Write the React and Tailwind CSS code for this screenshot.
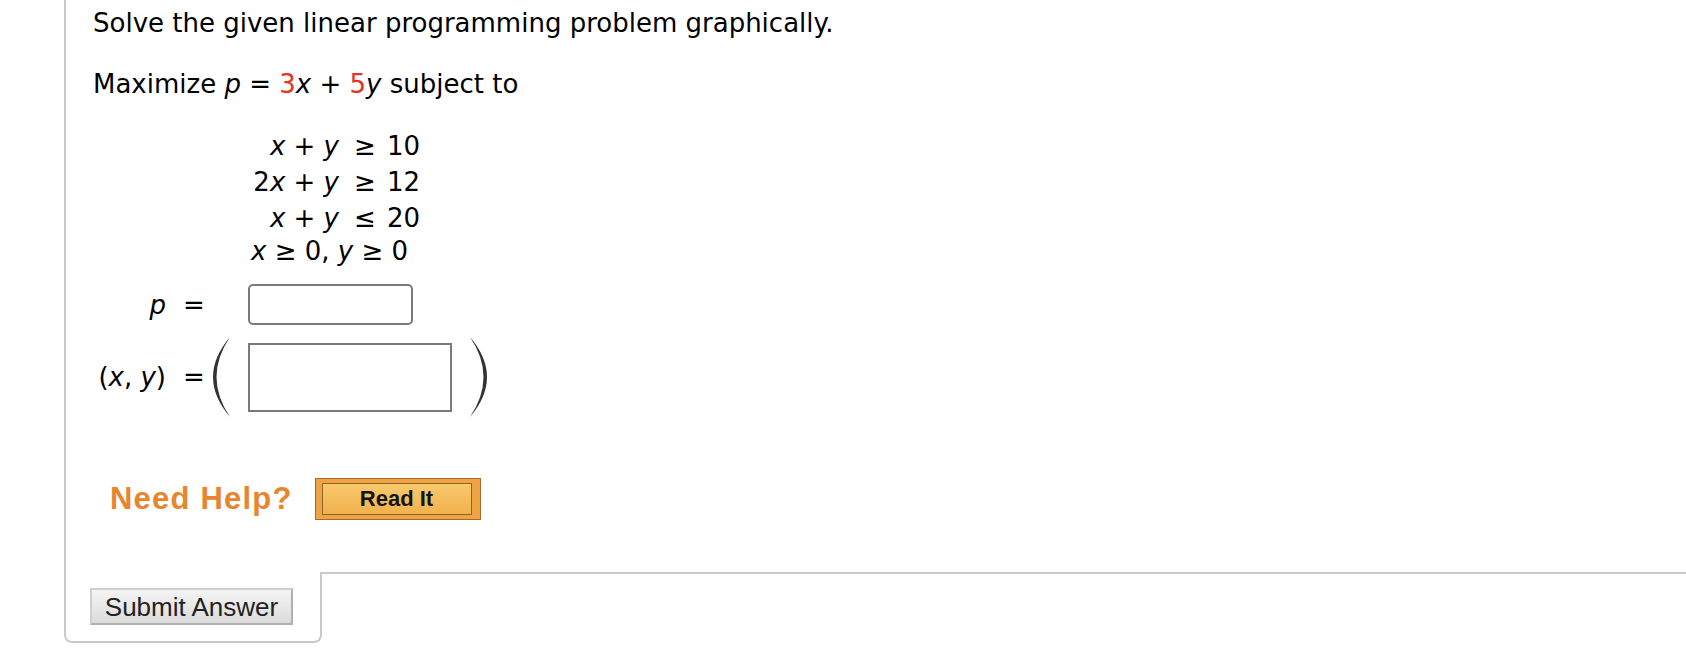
export default function App() {
  const red = "text-[#e8321e]";
  return (
    <div className="min-h-screen bg-white text-black font-['DejaVu_Sans',sans-serif] text-[26px] leading-[30px]">
      <div className="pl-[64px]">
        <div className="border-l-2 border-[#c9c9c9] h-[572px] pl-[27px] pt-[8px]">
          <p>Solve the given linear programming problem graphically.</p>
          <p className="mt-[31px]">
            Maximize <i>p</i> = <span className={red}>3</span><i>x</i> + <span className={red}>5</span><i>y</i> subject to
          </p>

          <div className="mt-[29px] ml-[158px]">
            <div className="flex leading-[36px] h-[36px]">
              <span className="w-[88px] text-right whitespace-pre"><i>x</i> + <i>y</i></span>
              <span className="ml-[15px] w-[22px]">≥</span>
              <span className="ml-[11px]">10</span>
            </div>
            <div className="flex leading-[36px] h-[36px]">
              <span className="w-[88px] text-right whitespace-pre">2<i>x</i> + <i>y</i></span>
              <span className="ml-[15px] w-[22px]">≥</span>
              <span className="ml-[11px]">12</span>
            </div>
            <div className="flex leading-[36px] h-[33px]">
              <span className="w-[88px] text-right whitespace-pre"><i>x</i> + <i>y</i></span>
              <span className="ml-[15px] w-[22px]">≤</span>
              <span className="ml-[11px]">20</span>
            </div>
            <div className="leading-[36px] h-[36px] whitespace-pre">
              <i>x</i> ≥ 0, <i>y</i> ≥ 0
            </div>
          </div>

          <div className="mt-[15px] flex items-center h-[41px]">
            <span className="w-[73px] text-right"><i>p</i></span>
            <span className="ml-[17px]">=</span>
            <div className="ml-[43px] w-[165px] h-[41px] border-2 border-[#7a7a7a] rounded-[5px] bg-white" />
          </div>

          <div className="mt-[12px] flex items-center h-[80px]">
            <span className="w-[73px] text-right whitespace-pre">(<i>x</i>, <i>y</i>)</span>
            <span className="ml-[17px]">=</span>
            <svg className="ml-[8px]" width="18" height="80" viewBox="0 0 18 80">
              <path d="M17 0 Q -17 40 17 80 Q -10 40 17 0 Z" fill="#333" />
            </svg>
            <div className="ml-[17px] w-[204px] h-[69px] border-2 border-[#7a7a7a] bg-white" />
            <svg className="ml-[17px]" width="18" height="80" viewBox="0 0 18 80">
              <path d="M1 0 Q 35 40 1 80 Q 28 40 1 0 Z" fill="#333" />
            </svg>
          </div>

          <div className="mt-[61px] flex items-center h-[42px]">
            <span className="ml-[17px] font-['Liberation_Sans',Arial,sans-serif] font-bold text-[31px] leading-[34px] tracking-[1.2px] text-[#e8862e]">
              Need Help?
            </span>
            <button className="ml-[22px] w-[166px] h-[42px] border border-[#a86a2a] bg-[#efa443] pt-[4px] pb-[4px] pl-[6px] pr-[8px]">
              <div className="w-full h-full border border-[#8c6530] bg-linear-to-b from-[#f8c96c] to-[#f0b24c] flex items-center justify-center font-['Liberation_Sans',Arial,sans-serif] font-bold text-[22px] leading-none text-[#141414]">
                Read It
              </div>
            </button>
          </div>
        </div>

        <div className="flex">
          <div className="w-[258px] h-[71px] border-2 border-t-0 border-[#c9c9c9] rounded-b-[8px] pl-[24px] pt-[16px]">
            <button className="w-[203px] h-[37px] border-2 border-t-[#cfcfcf] border-l-[#cfcfcf] border-r-[#b0b0b0] border-b-[#b0b0b0] bg-linear-to-b from-[#f4f4f4] to-[#dcdcdc] font-['Liberation_Sans',Arial,sans-serif] text-[26px] leading-none text-[#222] flex items-center justify-center">
              Submit Answer
            </button>
          </div>
          <div className="flex-1 border-t-2 border-[#c9c9c9]" />
        </div>
      </div>
    </div>
  );
}
